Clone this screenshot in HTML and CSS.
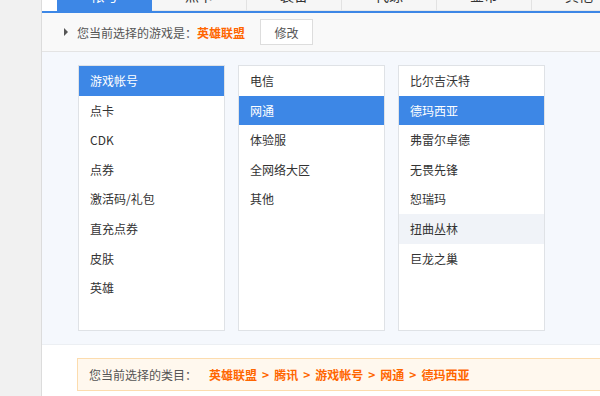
FILE: index.html
```html
<!DOCTYPE html>
<html lang="zh-CN">

<head>
    <meta charset="UTF-8">
    <meta name="viewport" content="width=device-width, initial-scale=1.0">
    <title>选择游戏类目</title>
    <link rel="stylesheet" href="styles.css">
</head>

<body>
    <div class="page">
        <div class="side"></div>

        <div class="main">
            <div class="tabs">
                <div class="tab on">帐号</div>
                <div class="tab">点卡</div>
                <div class="tab">装备</div>
                <div class="tab">代练</div>
                <div class="tab">金币</div>
                <div class="tab">其他</div>
            </div>

            <div class="gameBar">
                <span class="arrow"></span>
                <span>您当前选择的游戏是：</span><b class="hl">英雄联盟</b>
                <button class="editBtn">修改</button>
            </div>

            <div class="picker">
                <ul class="col">
                    <li class="on">游戏帐号</li>
                    <li>点卡</li>
                    <li>CDK</li>
                    <li>点券</li>
                    <li>激活码/礼包</li>
                    <li>直充点券</li>
                    <li>皮肤</li>
                    <li>英雄</li>
                </ul>
                <ul class="col">
                    <li>电信</li>
                    <li class="on">网通</li>
                    <li>体验服</li>
                    <li>全网络大区</li>
                    <li>其他</li>
                </ul>
                <ul class="col">
                    <li>比尔吉沃特</li>
                    <li class="on">德玛西亚</li>
                    <li>弗雷尔卓德</li>
                    <li>无畏先锋</li>
                    <li>恕瑞玛</li>
                    <li class="hover">扭曲丛林</li>
                    <li>巨龙之巢</li>
                </ul>
            </div>

            <div class="result">
                <div class="crumb">
                    <span>您当前选择的类目：</span>
                    <span class="path">英雄联盟<i>&gt;</i>腾讯<i>&gt;</i>游戏帐号<i>&gt;</i>网通<i>&gt;</i>德玛西亚</span>
                </div>
            </div>
        </div>
    </div>
</body>

</html>
```

FILE: styles.css
```css
html,
body {
    height: 100%;
    margin: 0;
    overflow: hidden;
}

body {
    font-family: "Noto Sans CJK SC", "Liberation Sans", sans-serif;
    font-size: 12px;
    color: #333;
    background: #fff;
}

.page {
    display: flex;
    height: 100%;
}

.side {
    flex: none;
    width: 41px;
    background: #f1f1f1;
    border-right: 1px solid #dcdcdc;
}

.main {
    flex: 1;
    min-width: 0;
    overflow: hidden;
}

/* top tabs (page is scrolled, only the bottom is visible) */
.tabs {
    display: flex;
    height: 11px;
    padding-left: 15px;
    border-bottom: 2px solid #3d87e6;
    overflow: hidden;
}

.tab {
    flex: none;
    box-sizing: border-box;
    width: 95px;
    height: 30px;
    margin-top: -19px;
    line-height: 28px;
    text-align: center;
    font-size: 14px;
    background: #f6f6f6;
    border-right: 1px solid #e2e2e2;
    border-bottom: 1px solid #e8e8e8;
}

.tab.on {
    background: #3d87e6;
    color: #fff;
    border: none;
}

.gameBar {
    display: flex;
    align-items: center;
    height: 38px;
    padding-left: 22px;
    background: #f9f9f9;
    border-bottom: 1px solid #e4e4e4;
    color: #555;
}

.arrow {
    width: 0;
    height: 0;
    margin-right: 9px;
    border-left: 4px solid #555;
    border-top: 4px solid transparent;
    border-bottom: 4px solid transparent;
}

.hl {
    color: #ff6600;
    font-weight: bold;
}

.editBtn {
    width: 53px;
    height: 26px;
    margin-left: 15px;
    padding: 0;
    font: inherit;
    color: #555;
    background: #fff;
    border: 1px solid #ddd;
}

.picker {
    display: flex;
    gap: 13px;
    padding: 13px 0 13px 36px;
    background: #f5f8fd;
    border-bottom: 1px solid #eceff3;
}

.col {
    list-style: none;
    margin: 0;
    padding: 0;
    box-sizing: border-box;
    width: 147px;
    height: 266px;
    background: #fff;
    border: 1px solid #dfe2e6;
}

.col li {
    height: 29.6px;
    line-height: 29.6px;
    padding-left: 11px;
}

.col li.on {
    background: #3d87e6;
    color: #fff;
}

.col li.hover {
    background: #f0f3f8;
}

.result {
    padding: 13px 0 0 35px;
}

.crumb {
    display: flex;
    align-items: center;
    box-sizing: border-box;
    height: 33px;
    margin-right: -10px;
    padding-left: 11px;
    background: #fff8ee;
    border: 1px solid #fcdcae;
    color: #555;
}

.path {
    margin-left: 12px;
    color: #ff6600;
    font-weight: bold;
}

.path i {
    font-style: normal;
    margin: 0 5px;
}
```
